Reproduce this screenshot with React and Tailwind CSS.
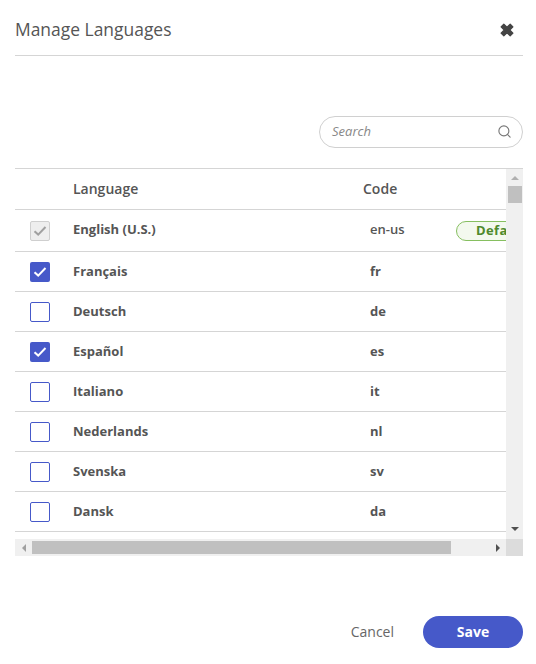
import React from "react";
import { Search } from "lucide-react";

const rows = [
  ["Français", "fr", true],
  ["Deutsch", "de", false],
  ["Español", "es", true],
  ["Italiano", "it", false],
  ["Nederlands", "nl", false],
  ["Svenska", "sv", false],
  ["Dansk", "da", false],
];

function Check({ color }) {
  return (
    <svg width="14" height="12" viewBox="0 0 14 12" fill="none">
      <path d="M1.5 6.2 L5.2 9.6 L12.5 2" stroke={color} strokeWidth="2" />
    </svg>
  );
}

function Box({ checked }) {
  return checked ? (
    <div className="w-5 h-5 rounded-[2px] bg-[#4659c9] flex items-center justify-center">
      <Check color="#ffffff" />
    </div>
  ) : (
    <div className="w-5 h-5 rounded-[2px] border border-[#4659c9] bg-white" />
  );
}

export default function App() {
  return (
    <div className="w-[536px] h-[664px] bg-white text-[#555] font-['Open_Sans',sans-serif] px-[15px] overflow-hidden mx-auto">
      <div className="relative w-[508px] h-[56px] border-b border-[#d5d5d5] flex items-start">
        <h1 className="mt-[17px] text-[17.45px] leading-6 font-medium text-[#555]">Manage Languages</h1>
        <svg className="absolute right-[8px] top-[22px]" width="16" height="16" viewBox="0 0 14 14">
          <path d="M1.8 4.2 L4.2 1.8 L7 4.6 L9.8 1.8 L12.2 4.2 L9.4 7 L12.2 9.8 L9.8 12.2 L7 9.4 L4.2 12.2 L1.8 9.8 L4.6 7 Z" fill="#444" stroke="#444" strokeWidth="1" strokeLinejoin="round" />
        </svg>
      </div>

      <div className="mt-[60px] w-[508px] flex justify-end">
        <div className="w-[204px] h-[32px] rounded-full border border-[#d0d0d0] flex items-center justify-between pl-[12px] pr-[10px]">
          <span className="text-[13px] italic text-[#888]">Search</span>
          <Search size={15} strokeWidth={1.8} color="#777" className="mb-[2px]" />
        </div>
      </div>

      <div className="mt-[20px] w-[508px] h-[388px] border-t border-b border-[#d5d5d5] grid grid-cols-[491px_17px] grid-rows-[370px_17px]">
        <div className="overflow-hidden">
          <div className="w-[560px]">
            <div className="h-[41px] border-b border-[#d5d5d5] flex items-center text-[14px] font-semibold text-[#555] pb-[2px]">
              <div className="w-[58px]" />
              <div className="w-[290px]">Language</div>
              <div>Code</div>
            </div>
            <div className="h-[42px] border-b border-[#d5d5d5] flex items-center text-[13px] font-semibold">
              <div className="w-[58px] pl-[15px]">
                <div className="w-5 h-5 rounded-[2px] border border-[#cfcfcf] bg-[#eeeeee] flex items-center justify-center">
                  <Check color="#a0a0a0" />
                </div>
              </div>
              <div className="w-[297px] font-bold pb-[2px]">English (U.S.)</div>
              <div className="w-[86px] pb-[2px]">en-us</div>
              <div className="h-5 w-[90px] rounded-full border border-[#86bf60] bg-[#f3f9ee] text-[#4f8a2c] text-[13px] font-bold tracking-[0.4px] flex items-center pl-[19px]">Default</div>
            </div>
            {rows.map(([name, code, checked]) => (
              <div key={code} className="h-[40px] border-b border-[#d5d5d5] flex items-center text-[13px] font-bold text-[#555]">
                <div className="w-[58px] pl-[15px]">
                  <Box checked={checked} />
                </div>
                <div className="w-[297px] pt-[1px]">{name}</div>
                <div className="pt-[1px]">{code}</div>
              </div>
            ))}
          </div>
        </div>

        <div className="bg-[#f0f0f0] flex flex-col items-center justify-between pb-[8px]">
          <div className="flex flex-col items-center w-full">
            <div className="h-[17px] flex items-center justify-center">
              <div className="w-0 h-0 border-x-[4px] border-x-transparent border-b-[4px] border-b-[#b0b0b0]" />
            </div>
            <div className="w-[14px] h-[17px] bg-[#c0c0c0]" />
          </div>
          <div className="w-0 h-0 border-x-[4px] border-x-transparent border-t-[4px] border-t-[#505050]" />
        </div>

        <div className="bg-[#f0f0f0] flex items-center justify-between pr-[6px]">
          <div className="flex items-center h-full">
            <div className="w-[17px] flex items-center justify-center">
              <div className="w-0 h-0 border-y-[4px] border-y-transparent border-r-[4px] border-r-[#a0a0a0]" />
            </div>
            <div className="w-[419px] h-[13px] bg-[#c0c0c0]" />
          </div>
          <div className="w-0 h-0 border-y-[4px] border-y-transparent border-l-[4px] border-l-[#505050]" />
        </div>
        <div className="bg-[#dcdcdc]" />
      </div>

      <div className="mt-[60px] w-[508px] flex justify-end items-center">
        <span className="text-[14px] text-[#666] mr-[29px] pb-[2px]">Cancel</span>
        <div className="w-[100px] h-[32px] rounded-full bg-[#4659c9] text-white text-[14px] font-bold flex items-center justify-center pb-[2px]">Save</div>
      </div>
    </div>
  );
}
